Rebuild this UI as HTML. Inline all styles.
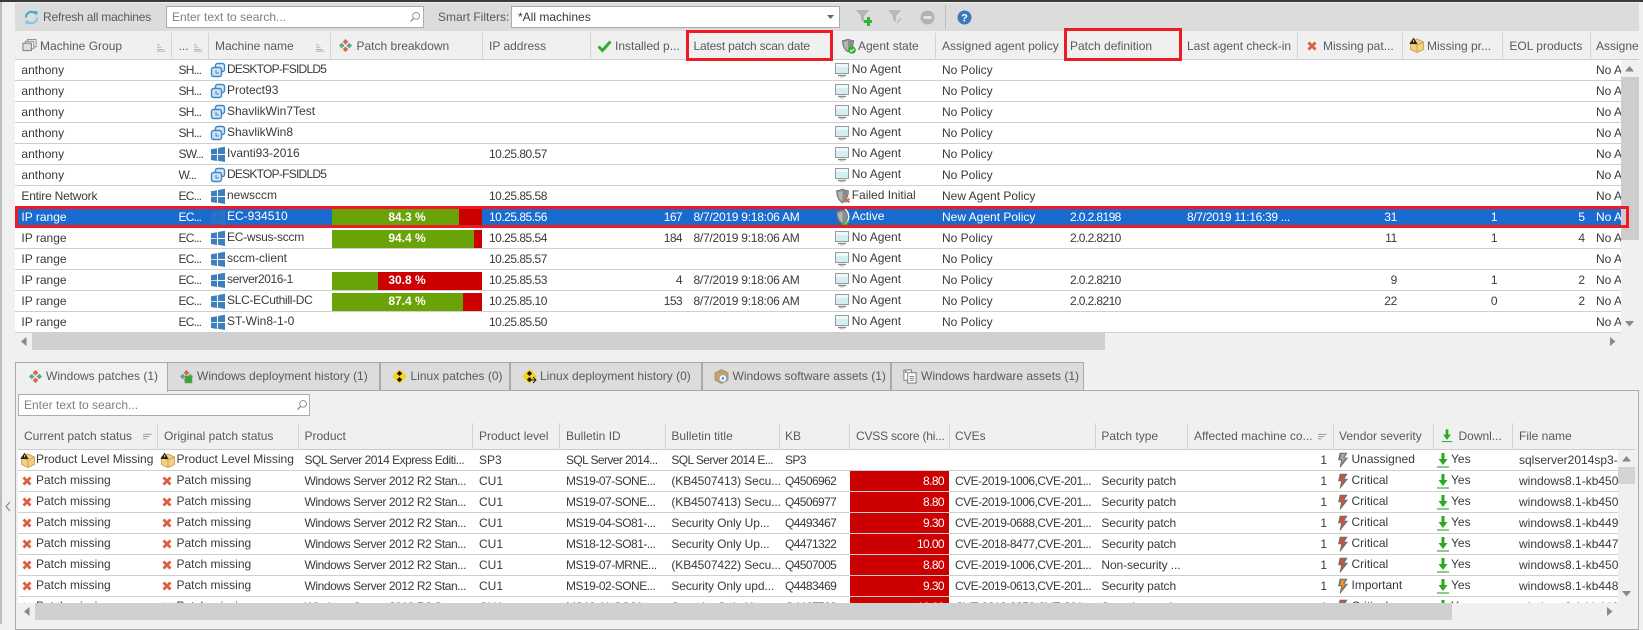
<!DOCTYPE html>
<html><head><meta charset="utf-8"><style>
*{box-sizing:border-box}
html,body{margin:0;padding:0}
body{width:1643px;height:624px;overflow:hidden;position:relative;background:#f0f0f0;font:12px/20px "Liberation Sans",sans-serif;color:#3a3a3a}
div{position:absolute}
i{position:absolute;font-style:normal;white-space:nowrap;top:0}
svg{position:absolute;overflow:visible}
.hd i{color:#555b62;top:3px;line-height:24px}
.hd .sp{position:absolute;top:2px;width:1px;height:27px;background:#d4d4d4}
.hd{left:0;height:29px;background:#f0f0f0;border-bottom:1px solid #ccc}
.r{position:relative;height:21px;width:1640px;background:#fff;border-bottom:1px solid #cfcfcf}
.r svg{top:2px;width:16px;height:16px}
.u{top:-1px}
.s{background:#1a6bd0;color:#fff;border-bottom:0}
.a{left:21.4px}.b{left:178.5px;letter-spacing:-.8px}.n{left:227px}.ip{left:489px;letter-spacing:-.5px}.ins{width:60px;text-align:right;letter-spacing:-.6px}.dt{left:693.5px;letter-spacing:-.25px}.ag{left:851.7px}.po{left:942px}.pd{left:1070px;letter-spacing:-.6px}.lc{left:1187px;letter-spacing:-.3px}.mp{left:1340px;width:57px;text-align:right;letter-spacing:-.3px}.mr{left:1440px;width:57.6px;text-align:right}.eo{left:1528px;width:57px;text-align:right}.as{left:1596px}
.bar{position:absolute;left:332px;top:2px;width:150px;height:18px;background:#cc0000;color:#fff;font-weight:bold;text-align:center;line-height:16px}
.bar u{position:absolute;left:0;top:0;height:18px;background:#6aa307}
.bar span{position:relative}
.tb{top:362px;height:29px;background:#dcdcdc;border:1px solid #aaa;border-bottom:1px solid #aaa;line-height:27px;color:#555b62}
.tb i{top:0;line-height:27px}
.tb svg{top:6px;width:15px;height:15px}
.sr{background:#fff;border:1px solid #acacac;color:#808080;height:22px;line-height:20px;padding-left:5px}
.l1{left:36px}.l2{left:176.5px}.l3{left:304.5px;letter-spacing:-.42px}.l4{left:479px}.l5{left:566px;letter-spacing:-.5px}.l6{left:671.4px;letter-spacing:-.1px}.l7{left:785px;letter-spacing:-.6px}
.cv{position:absolute;left:850px;top:0;width:99px;height:20px;background:#cc0000;color:#fff;text-align:right;padding-right:5px;letter-spacing:-.6px}
.l9{left:955px;letter-spacing:-.5px}.l10{left:1101.4px;letter-spacing:-.1px}.l11{left:1270px;width:57px;text-align:right}.l12{left:1351.5px}.l13{left:1451px}.l14{left:1519px}
</style></head><body>
<svg width="0" height="0" style="position:absolute">
<defs>
<symbol id="vm" viewBox="0 0 16 16"><rect x="5.5" y="1.5" width="9" height="8" rx="2" fill="#d8e8f6" stroke="#3f86c7" stroke-width="1.4"/><rect x="1.5" y="5.5" width="10" height="9" rx="2" fill="#cfe2f3" stroke="#3f86c7" stroke-width="1.4"/><path d="M6 8v3h3" fill="none" stroke="#3f86c7"/></symbol>
<symbol id="win" viewBox="0 0 16 16"><path d="M1 3.2l6-1v6H1zM8 2l7-1.2V8H8zM1 9h6v6l-6-1zM8 9h7v7l-7-1.2z" fill="#3f7fbd"/></symbol>
<symbol id="mon" viewBox="0 0 16 16"><rect x="1.5" y="1.5" width="13" height="10" fill="#d5eef4" stroke="#9a9a9a"/><path d="M2 2h12v3H2z" fill="#eef9fb"/><path d="M4 13.5h8" stroke="#8a8a8a" stroke-width="1.4"/><path d="M6 15h4" stroke="#c4c4c4"/></symbol>
<symbol id="sh" viewBox="0 0 16 16"><path d="M1.5 2.5C5 2.5 7 1 7.5 1c.6 0 2.500 1.500 6 1.500 0 6-1.500 10-6 12.500-4.500-2.500-6-6.500-6-12.500z" fill="#8c8c8c" stroke="#6e6e6e" stroke-width=".6"/><path d="M7.500 2.500v11C4 11.500 3 8 3 4c2 0 3.500-1 4.500-1.500z" fill="#b5b5b5"/></symbol>
<symbol id="x" viewBox="0 0 16 16"><path d="M4.500 4.500l7 7M11.500 4.500l-7 7" stroke="#dc5f3e" stroke-width="2.800"/></symbol>
<symbol id="box" viewBox="0 0 16 16"><path d="M8 2l6.500 3v7.500L8 15.500l-6.500-3V5z" fill="#f2cf82" stroke="#c89a45" stroke-width=".8"/><path d="M1.500 5L8 8.200l6.500-3.200M8 8.200v7.300" fill="none" stroke="#c89a45" stroke-width=".8"/><path d="M4.500 .6L8.600 7H.4z" fill="#222"/><path d="M4.500 2.800v2.400" stroke="#f5d300" stroke-width="1"/></symbol>
<symbol id="bolt" viewBox="0 0 16 16"><path d="M5 1h7L9 6h3.500L5 15.500 6.500 8H3.500z" fill="#8a6d66" stroke="#666" stroke-width=".6"/><path d="M6.500 1.800h3.800L8 6h2.500L6 12l1.500-5H5z" fill="#c9553a"/></symbol>
<symbol id="boltg" viewBox="0 0 16 16"><path d="M5 1h7L9 6h3.500L5 15.500 6.500 8H3.500z" fill="#777" stroke="#666" stroke-width=".6"/><path d="M6.500 1.800h3.800L8 6h2.500L6 12l1.500-5H5z" fill="#a8a8a8"/></symbol>
<symbol id="bolto" viewBox="0 0 16 16"><path d="M5 1h7L9 6h3.500L5 15.500 6.500 8H3.500z" fill="#777" stroke="#666" stroke-width=".6"/><path d="M6.500 1.800h3.800L8 6h2.500L6 12l1.500-5H5z" fill="#ef9a12"/></symbol>
<symbol id="dl" viewBox="0 0 16 16"><path d="M6.500 1h3v6h3l-4.500 6-4.500-6h3z" fill="#2aa81f"/><path d="M2 15h12" stroke="#2aa81f" stroke-width="1.100"/></symbol>
<symbol id="dia" viewBox="0 0 16 16"><path d="M8 1l3 3-3 3-3-3z" fill="#d9654c"/><path d="M8 9l3 3-3 3-3-3z" fill="#d9654c"/><path d="M4 5l3 3-3 3-3-3z" fill="#62a58a"/><path d="M12 5l3 3-3 3-3-3z" fill="#62a58a"/></symbol>
<symbol id="lin" viewBox="0 0 16 16"><path d="M8 0l8 8-8 8-8-8z" fill="#f7d416"/><path d="M8 2l2.800 2.800L8 7.500 5.200 4.800zM8 8.500l2.800 2.800L8 14l-2.800-2.700z" fill="#111"/></symbol>
<symbol id="sort1" viewBox="0 0 10 8"><path d="M0 .5h3M0 3h5M0 5.500h7.500M0 7.500h9.500" stroke="#a0a0a0" stroke-width=".8"/></symbol>
<symbol id="sort2" viewBox="0 0 10 8"><path d="M0 1h9.500M0 3.500h7M0 6h4" stroke="#8e8e8e" stroke-width="1"/></symbol>
<symbol id="mag" viewBox="0 0 16 16"><circle cx="9.500" cy="6.500" r="4.500" fill="none" stroke="#777" stroke-width="1"/><path d="M6 10l-4 4" stroke="#777" stroke-width="1.400"/></symbol>
</defs></svg>

<!-- toolbar -->
<div style="left:15px;top:3px;width:1624px;height:28px;background:#dcdcdc"></div>
<svg style="left:24px;top:10px" width="15" height="15" viewBox="0 0 16 16"><path d="M2 8a6 6 0 0 1 10.500-4" fill="none" stroke="#3ea6e0" stroke-width="2.200"/><path d="M14 8a6 6 0 0 1-10.500 4" fill="none" stroke="#7cc5ec" stroke-width="2.200"/><path d="M10 1l4.500 0.500L14 6z" fill="#3ea6e0"/><path d="M6 15l-4.500-.5L2 10z" fill="#7cc5ec"/></svg>
<i style="left:43px;top:7px;color:#555b62;letter-spacing:-.2px">Refresh all machines</i>
<div class="sr" style="left:166px;top:6px;width:258px">Enter text to search...</div>
<svg style="left:409px;top:11px" width="12" height="12"><use href="#mag"/></svg>
<i style="left:438px;top:7px;color:#555b62">Smart Filters:</i>
<div style="left:511px;top:6px;width:329px;height:22px;background:#fff;border:1px solid #acacac;line-height:20px;padding-left:6px;color:#3a3a3a">*All machines</div>
<svg style="left:827px;top:15px" width="8" height="5"><path d="M0 0h7L3.500 4z" fill="#666"/></svg>
<svg style="left:855px;top:9px" width="17" height="17" viewBox="0 0 17 17"><path d="M1 1h13L9 7v6L6 11V7z" fill="#b4b4b4"/><path d="M9 11h3V8h3v3h2v3h-2v3h-3v-3H9z" fill="#32b432"/></svg>
<svg style="left:887px;top:9px" width="17" height="17" viewBox="0 0 17 17"><path d="M1 1h13L9 7v6L6 11V7z" fill="#b8b8b8"/><path d="M10 14l4-5" stroke="#c4c4c4" stroke-width="2"/></svg>
<svg style="left:920px;top:10px" width="15" height="15"><circle cx="7.500" cy="7.500" r="7" fill="#b2b2b2"/><rect x="3.500" y="6" width="8" height="3" fill="#e4e4e4"/></svg>
<div style="left:945px;top:5px;width:1px;height:24px;background:#bcbcbc"></div>
<svg style="left:957px;top:10px" width="15" height="15"><circle cx="7.500" cy="7.500" r="7" fill="#3d78bd"/><text x="7.500" y="11.500" text-anchor="middle" font-family="Liberation Sans" font-weight="bold" font-size="11" fill="#fff">?</text></svg>

<!-- upper header -->
<div class="hd" style="top:31px;width:1624px;left:15px;height:29px"></div>
<div class="hd" style="top:31px;width:1639px;background:none;border:0;overflow:hidden;height:29px">
<span class="sp" style="left:171px"></span><span class="sp" style="left:208px"></span><span class="sp" style="left:330px"></span><span class="sp" style="left:482px"></span><span class="sp" style="left:590px"></span><span class="sp" style="left:935px"></span><span class="sp" style="left:1297px"></span><span class="sp" style="left:1402px"></span><span class="sp" style="left:1502px"></span><span class="sp" style="left:1590px"></span>
<svg style="left:22px;top:7px" width="15" height="15" viewBox="0 0 16 16"><rect x="6" y="1.500" width="9" height="8" fill="#f4f4f4" stroke="#8a8a8a"/><rect x="3.500" y="3.500" width="9" height="8" fill="#f4f4f4" stroke="#8a8a8a"/><rect x="1" y="5.500" width="9" height="8" fill="#dedede" stroke="#777"/></svg>
<i style="left:40px">Machine Group</i><svg style="left:157px;top:13px" width="9" height="8"><use href="#sort1"/></svg>
<i style="left:178.500px">...</i><svg style="left:194px;top:13px" width="9" height="8"><use href="#sort1"/></svg>
<i style="left:215px">Machine name</i><svg style="left:316px;top:13px" width="9" height="8"><use href="#sort1"/></svg>
<svg style="left:338px;top:7px" width="15" height="15"><use href="#dia"/></svg><i style="left:356.500px">Patch breakdown</i>
<i style="left:489px">IP address</i>
<svg style="left:597px;top:8px" width="15" height="14" viewBox="0 0 15 14"><path d="M1.500 7.500l4 4L13.500 2.500" fill="none" stroke="#2fb02f" stroke-width="3"/></svg><i style="left:615px">Installed p...</i>
<i style="left:693.500px;letter-spacing:-.2px">Latest patch scan date</i>
<svg style="left:841px;top:6px" width="15" height="17"><use href="#sh"/></svg><svg style="left:848px;top:15px" width="8" height="8"><circle cx="4" cy="4" r="3.800" fill="#2fb02f"/><path d="M2 4l1.500 1.500L6 2.800" stroke="#fff" fill="none"/></svg><i style="left:858px">Agent state</i>
<i style="left:942px">Assigned agent policy</i>
<i style="left:1070px">Patch definition</i>
<i style="left:1187px">Last agent check-in</i>
<svg style="left:1304px;top:7px" width="16" height="16"><use href="#x"/></svg><i style="left:1323px">Missing pat...</i>
<svg style="left:1409px;top:6px" width="16" height="16"><use href="#box"/></svg><i style="left:1427px">Missing pr...</i>
<i style="left:1509.400px">EOL products</i>
<i style="left:1596px">Assigned</i>
</div>

<!-- upper rows -->
<div style="left:0;top:60px;width:1621px;height:273px;overflow:hidden">
<div class="r"><i class="a">anthony</i><i class="b">SH...</i><svg style="left:210px"><use href="#vm"/></svg><i class="n u" style="letter-spacing:-.75px">DESKTOP-FSIDLD5</i><svg style="left:834px"><use href="#mon"/></svg><i class="ag u">No Agent</i><i class="po">No Policy</i><i class="as">No Agent</i></div>
<div class="r"><i class="a">anthony</i><i class="b">SH...</i><svg style="left:210px"><use href="#vm"/></svg><i class="n u">Protect93</i><svg style="left:834px"><use href="#mon"/></svg><i class="ag u">No Agent</i><i class="po">No Policy</i><i class="as">No Agent</i></div>
<div class="r"><i class="a">anthony</i><i class="b">SH...</i><svg style="left:210px"><use href="#vm"/></svg><i class="n u">ShavlikWin7Test</i><svg style="left:834px"><use href="#mon"/></svg><i class="ag u">No Agent</i><i class="po">No Policy</i><i class="as">No Agent</i></div>
<div class="r"><i class="a">anthony</i><i class="b">SH...</i><svg style="left:210px"><use href="#vm"/></svg><i class="n u">ShavlikWin8</i><svg style="left:834px"><use href="#mon"/></svg><i class="ag u">No Agent</i><i class="po">No Policy</i><i class="as">No Agent</i></div>
<div class="r"><i class="a">anthony</i><i class="b">SW...</i><svg style="left:210px"><use href="#win"/></svg><i class="n u">Ivanti93-2016</i><i class="ip">10.25.80.57</i><svg style="left:834px"><use href="#mon"/></svg><i class="ag u">No Agent</i><i class="po">No Policy</i><i class="as">No Agent</i></div>
<div class="r"><i class="a">anthony</i><i class="b">W...</i><svg style="left:210px"><use href="#vm"/></svg><i class="n u" style="letter-spacing:-.75px">DESKTOP-FSIDLD5</i><svg style="left:834px"><use href="#mon"/></svg><i class="ag u">No Agent</i><i class="po">No Policy</i><i class="as">No Agent</i></div>
<div class="r"><i class="a" style="letter-spacing:-.2px">Entire Network</i><i class="b">EC...</i><svg style="left:210px"><use href="#win"/></svg><i class="n u">newsccm</i><i class="ip">10.25.85.58</i><svg style="left:835px"><use href="#sh"/></svg><svg style="left:843px;top:10px;width:9px;height:9px"><use href="#x"/></svg><i class="ag u">Failed Initial</i><i class="po">New Agent Policy</i><i class="as">No Agent</i></div>
<div class="r s"><i class="a">IP range</i><i class="b">EC...</i><svg style="left:210px;opacity:.45"><use href="#win"/></svg><i class="n u">EC-934510</i><div class="bar"><u style="width:127px"></u><span>84.3 %</span></div><i class="ip">10.25.85.56</i><i class="ins" style="left:622px">167</i><i class="dt">8/7/2019 9:18:06 AM</i><svg style="left:835px"><use href="#sh"/></svg><svg style="left:841px;top:1px;width:10px;height:19px" viewBox="0 0 10 19"><path d="M4 1c5 4 5 11 0 15" fill="none" stroke="#fff" stroke-width="1.400"/><path d="M1 15l2.500 3L8 13" fill="none" stroke="#2fc02f" stroke-width="2"/></svg><i class="ag u">Active</i><i class="po">New Agent Policy</i><i class="pd">2.0.2.8198</i><i class="lc">8/7/2019 11:16:39 ...</i><i class="mp">31</i><i class="mr">1</i><i class="eo">5</i><i class="as">No Agent</i></div>
<div class="r"><i class="a">IP range</i><i class="b">EC...</i><svg style="left:210px"><use href="#win"/></svg><i class="n u" style="letter-spacing:-.25px">EC-wsus-sccm</i><div class="bar"><u style="width:142px"></u><span>94.4 %</span></div><i class="ip">10.25.85.54</i><i class="ins" style="left:622px">184</i><i class="dt">8/7/2019 9:18:06 AM</i><svg style="left:834px"><use href="#mon"/></svg><i class="ag u">No Agent</i><i class="po">No Policy</i><i class="pd">2.0.2.8210</i><i class="mp">11</i><i class="mr">1</i><i class="eo">4</i><i class="as">No Agent</i></div>
<div class="r"><i class="a">IP range</i><i class="b">EC...</i><svg style="left:210px"><use href="#win"/></svg><i class="n u">sccm-client</i><i class="ip">10.25.85.57</i><svg style="left:834px"><use href="#mon"/></svg><i class="ag u">No Agent</i><i class="po">No Policy</i><i class="as">No Agent</i></div>
<div class="r"><i class="a">IP range</i><i class="b">EC...</i><svg style="left:210px"><use href="#win"/></svg><i class="n u" style="letter-spacing:-.4px">server2016-1</i><div class="bar"><u style="width:46px"></u><span>30.8 %</span></div><i class="ip">10.25.85.53</i><i class="ins" style="left:622px">4</i><i class="dt">8/7/2019 9:18:06 AM</i><svg style="left:834px"><use href="#mon"/></svg><i class="ag u">No Agent</i><i class="po">No Policy</i><i class="pd">2.0.2.8210</i><i class="mp">9</i><i class="mr">1</i><i class="eo">2</i><i class="as">No Agent</i></div>
<div class="r"><i class="a">IP range</i><i class="b">EC...</i><svg style="left:210px"><use href="#win"/></svg><i class="n u" style="letter-spacing:-.3px">SLC-ECuthill-DC</i><div class="bar"><u style="width:131px"></u><span>87.4 %</span></div><i class="ip">10.25.85.10</i><i class="ins" style="left:622px">153</i><i class="dt">8/7/2019 9:18:06 AM</i><svg style="left:834px"><use href="#mon"/></svg><i class="ag u">No Agent</i><i class="po">No Policy</i><i class="pd">2.0.2.8210</i><i class="mp">22</i><i class="mr">0</i><i class="eo">2</i><i class="as">No Agent</i></div>
<div class="r"><i class="a">IP range</i><i class="b">EC...</i><svg style="left:210px"><use href="#win"/></svg><i class="n u">ST-Win8-1-0</i><i class="ip">10.25.85.50</i><svg style="left:834px"><use href="#mon"/></svg><i class="ag u">No Agent</i><i class="po">No Policy</i><i class="as">No Agent</i></div>
</div>
<div style="left:0;top:31px;width:15px;height:360px;background:#f0f0f0"></div>

<!-- upper scrollbars -->
<div style="left:1621px;top:60px;width:18px;height:273px;background:#f0f0f0"></div>
<div style="left:1621px;top:77px;width:18px;height:163px;background:#cdcdcd"></div>
<svg style="left:1625px;top:66px" width="10" height="6"><path d="M0 5.500h9L4.500 0z" fill="#888"/></svg>
<svg style="left:1625px;top:321px" width="10" height="6"><path d="M0 0h9L4.500 5.500z" fill="#888"/></svg>
<div style="left:15px;top:333px;width:1624px;height:17px;background:#f0f0f0"></div>
<div style="left:32px;top:333px;width:1073px;height:17px;background:#d0d0d0"></div>
<svg style="left:21px;top:337px" width="6" height="9"><path d="M5.500 0v9L0 4.500z" fill="#888"/></svg>
<svg style="left:1610px;top:337px" width="6" height="9"><path d="M0 0v9L5.500 4.500z" fill="#888"/></svg>

<!-- red highlight boxes -->
<div style="left:15px;top:206px;width:1614px;height:22px;border:3px solid #ed1c24"></div>
<div style="left:686px;top:30px;width:147px;height:31px;border:3px solid #ed1c24"></div>
<div style="left:1064px;top:28px;width:118px;height:33px;border:3px solid #ed1c24"></div>

<!-- tabs -->
<div style="left:15px;top:390px;width:1624px;height:240px;border:1px solid #aaa;background:#f0f0f0"></div>
<div class="tb" style="left:15px;width:153px;background:#f0f0f0;border-bottom:0;height:30px"><svg style="left:12px"><use href="#dia"/></svg><i style="left:30px">Windows patches (1)</i></div>
<div class="tb" style="left:167px;width:213px"><svg style="left:11px"><use href="#dia"/></svg><svg style="left:17px;top:13px;width:8px;height:8px"><rect width="7" height="7" fill="#2faa2f" stroke="#888" stroke-width=".5"/></svg><i style="left:29px">Windows deployment history (1)</i></div>
<div class="tb" style="left:380px;width:130px"><svg style="left:11px"><use href="#lin"/></svg><i style="left:29.500px">Linux patches (0)</i></div>
<div class="tb" style="left:510px;width:192px"><svg style="left:11px"><use href="#lin"/></svg><svg style="left:17px;top:13px;width:9px;height:8px"><path d="M0 4h8M5 1l3 3-3 3" stroke="#222" fill="none"/></svg><i style="left:29px">Linux deployment history (0)</i></div>
<div class="tb" style="left:702px;width:189px"><svg style="left:11px" viewBox="0 0 16 16"><path d="M8 .5l7 3.500v8L8 15.500 1 12V4z" fill="#c2a16a" stroke="#9c8050" stroke-width=".6"/><circle cx="9.500" cy="10" r="4" fill="#eef4f8" stroke="#8fa9bd"/><circle cx="9.500" cy="10" r="1.300" fill="#3a87c7"/></svg><i style="left:29.500px">Windows software assets (1)</i></div>
<div class="tb" style="left:891px;width:193px"><svg style="left:11px" viewBox="0 0 16 16"><rect x="1" y="1" width="8" height="11" fill="#fff" stroke="#777"/><rect x="5" y="4" width="9" height="11" fill="#fff" stroke="#777"/><path d="M7 8h5M7 10h5M7 12h5" stroke="#888"/><rect x="2" y="2" width="2" height="2" fill="#38a838"/></svg><i style="left:29px">Windows hardware assets (1)</i></div>
<div style="left:168px;top:390px;width:1471px;height:1px;background:#aaa"></div>
<div style="left:16px;top:390px;width:151px;height:1px;background:#f0f0f0"></div>

<!-- lower search -->
<div class="sr" style="left:18px;top:394px;width:292px">Enter text to search...</div>
<svg style="left:296px;top:399px" width="12" height="12"><use href="#mag"/></svg>

<!-- lower header -->
<div class="hd" style="top:421px;width:1617px;left:18px;height:29px"></div>
<div class="hd" style="top:421px;width:1635px;background:none;border:0;overflow:hidden;height:29px">
<span class="sp" style="left:157px"></span><span class="sp" style="left:298px"></span><span class="sp" style="left:472px"></span><span class="sp" style="left:559px"></span><span class="sp" style="left:665px"></span><span class="sp" style="left:779px"></span><span class="sp" style="left:849px"></span><span class="sp" style="left:949px"></span><span class="sp" style="left:1095px"></span><span class="sp" style="left:1187px"></span><span class="sp" style="left:1333px"></span><span class="sp" style="left:1433px"></span><span class="sp" style="left:1512px"></span>
<i style="left:24px">Current patch status</i><svg style="left:143px;top:12px" width="9" height="8"><use href="#sort2"/></svg>
<i style="left:164px">Original patch status</i>
<i style="left:304.500px">Product</i>
<i style="left:479px">Product level</i>
<i style="left:566px">Bulletin ID</i>
<i style="left:671.400px">Bulletin title</i>
<i style="left:785px">KB</i>
<i style="left:856px;letter-spacing:-.2px">CVSS score (hi...</i>
<i style="left:955px">CVEs</i>
<i style="left:1101.400px">Patch type</i>
<i style="left:1194px">Affected machine co...</i><svg style="left:1318px;top:12px" width="9" height="8"><use href="#sort2"/></svg>
<i style="left:1339px">Vendor severity</i>
<svg style="left:1440px;top:7px" width="14" height="15"><use href="#dl"/></svg><i style="left:1458.500px">Downl...</i>
<i style="left:1519px">File name</i>
</div>

<!-- lower rows -->
<div style="left:0;top:450px;width:1618px;height:153px;overflow:hidden">
<div class="r"><svg style="left:20px"><use href="#box"/></svg><i class="l1 u">Product Level Missing</i><svg style="left:160px"><use href="#box"/></svg><i class="l2 u">Product Level Missing</i><i class="l3" style="letter-spacing:-.5px">SQL Server 2014 Express Editi...</i><i class="l4">SP3</i><i class="l5" style="letter-spacing:-.6px">SQL Server 2014...</i><i class="l6" style="letter-spacing:-.6px">SQL Server 2014 E...</i><i class="l7">SP3</i><i class="l11">1</i><svg style="left:1335px"><use href="#boltg"/></svg><i class="l12 u">Unassigned</i><svg style="left:1435px"><use href="#dl"/></svg><i class="l13 u">Yes</i><i class="l14">sqlserver2014sp3-kb4</i></div>
<div class="r"><svg style="left:19px"><use href="#x"/></svg><i class="l1 u">Patch missing</i><svg style="left:159px"><use href="#x"/></svg><i class="l2 u">Patch missing</i><i class="l3">Windows Server 2012 R2 Stan...</i><i class="l4">CU1</i><i class="l5">MS19-07-SONE...</i><i class="l6">(KB4507413) Secu...</i><i class="l7">Q4506962</i><div class="cv">8.80</div><i class="l9">CVE-2019-1006,CVE-201...</i><i class="l10">Security patch</i><i class="l11">1</i><svg style="left:1335px"><use href="#bolt"/></svg><i class="l12 u">Critical</i><svg style="left:1435px"><use href="#dl"/></svg><i class="l13 u">Yes</i><i class="l14">windows8.1-kb4506</i></div>
<div class="r"><svg style="left:19px"><use href="#x"/></svg><i class="l1 u">Patch missing</i><svg style="left:159px"><use href="#x"/></svg><i class="l2 u">Patch missing</i><i class="l3">Windows Server 2012 R2 Stan...</i><i class="l4">CU1</i><i class="l5">MS19-07-SONE...</i><i class="l6">(KB4507413) Secu...</i><i class="l7">Q4506977</i><div class="cv">8.80</div><i class="l9">CVE-2019-1006,CVE-201...</i><i class="l10">Security patch</i><i class="l11">1</i><svg style="left:1335px"><use href="#bolt"/></svg><i class="l12 u">Critical</i><svg style="left:1435px"><use href="#dl"/></svg><i class="l13 u">Yes</i><i class="l14">windows8.1-kb4506</i></div>
<div class="r"><svg style="left:19px"><use href="#x"/></svg><i class="l1 u">Patch missing</i><svg style="left:159px"><use href="#x"/></svg><i class="l2 u">Patch missing</i><i class="l3">Windows Server 2012 R2 Stan...</i><i class="l4">CU1</i><i class="l5">MS19-04-SO81-...</i><i class="l6">Security Only Up...</i><i class="l7">Q4493467</i><div class="cv">9.30</div><i class="l9">CVE-2019-0688,CVE-201...</i><i class="l10">Security patch</i><i class="l11">1</i><svg style="left:1335px"><use href="#bolt"/></svg><i class="l12 u">Critical</i><svg style="left:1435px"><use href="#dl"/></svg><i class="l13 u">Yes</i><i class="l14">windows8.1-kb4493</i></div>
<div class="r"><svg style="left:19px"><use href="#x"/></svg><i class="l1 u">Patch missing</i><svg style="left:159px"><use href="#x"/></svg><i class="l2 u">Patch missing</i><i class="l3">Windows Server 2012 R2 Stan...</i><i class="l4">CU1</i><i class="l5">MS18-12-SO81-...</i><i class="l6">Security Only Up...</i><i class="l7">Q4471322</i><div class="cv">10.00</div><i class="l9">CVE-2018-8477,CVE-201...</i><i class="l10">Security patch</i><i class="l11">1</i><svg style="left:1335px"><use href="#bolt"/></svg><i class="l12 u">Critical</i><svg style="left:1435px"><use href="#dl"/></svg><i class="l13 u">Yes</i><i class="l14">windows8.1-kb4471</i></div>
<div class="r"><svg style="left:19px"><use href="#x"/></svg><i class="l1 u">Patch missing</i><svg style="left:159px"><use href="#x"/></svg><i class="l2 u">Patch missing</i><i class="l3">Windows Server 2012 R2 Stan...</i><i class="l4">CU1</i><i class="l5">MS19-07-MRNE...</i><i class="l6">(KB4507422) Secu...</i><i class="l7">Q4507005</i><div class="cv">8.80</div><i class="l9">CVE-2019-1006,CVE-201...</i><i class="l10">Non-security ...</i><i class="l11">1</i><svg style="left:1335px"><use href="#bolt"/></svg><i class="l12 u">Critical</i><svg style="left:1435px"><use href="#dl"/></svg><i class="l13 u">Yes</i><i class="l14">windows8.1-kb4507</i></div>
<div class="r"><svg style="left:19px"><use href="#x"/></svg><i class="l1 u">Patch missing</i><svg style="left:159px"><use href="#x"/></svg><i class="l2 u">Patch missing</i><i class="l3">Windows Server 2012 R2 Stan...</i><i class="l4">CU1</i><i class="l5">MS19-02-SONE...</i><i class="l6">Security Only upd...</i><i class="l7">Q4483469</i><div class="cv">9.30</div><i class="l9">CVE-2019-0613,CVE-201...</i><i class="l10">Security patch</i><i class="l11">1</i><svg style="left:1335px"><use href="#bolto"/></svg><i class="l12 u">Important</i><svg style="left:1435px"><use href="#dl"/></svg><i class="l13 u">Yes</i><i class="l14">windows8.1-kb4483</i></div>
<div class="r"><svg style="left:19px"><use href="#x"/></svg><i class="l1 u">Patch missing</i><svg style="left:159px"><use href="#x"/></svg><i class="l2 u">Patch missing</i><i class="l3">Windows Server 2012 R2 Stan...</i><i class="l4">CU1</i><i class="l5">MS18-11-SO81-...</i><i class="l6">Security Only Up...</i><i class="l7">Q4467703</i><div class="cv">10.00</div><i class="l9">CVE-2018-8256,CVE-201...</i><i class="l10">Security patch</i><i class="l11">1</i><svg style="left:1335px"><use href="#bolt"/></svg><i class="l12 u">Critical</i><svg style="left:1435px"><use href="#dl"/></svg><i class="l13 u">Yes</i><i class="l14">windows8.1-kb4467</i></div>
</div>
<div style="left:0;top:391px;width:15px;height:233px;background:#f0f0f0"></div>
<svg style="left:5px;top:502px" width="6" height="9"><path d="M5 0L1 4.500 5 9" fill="none" stroke="#8a8a8a" stroke-width="1.200"/></svg>
<div style="left:15px;top:391px;width:1px;height:233px;background:#aaa"></div>
<div style="left:16px;top:450px;width:2px;height:174px;background:#f0f0f0"></div>

<!-- lower scrollbars -->
<div style="left:1618px;top:450px;width:17px;height:170px;background:#f0f0f0"></div>
<div style="left:1618px;top:467px;width:17px;height:17px;background:#d4d4d4"></div>
<svg style="left:1622px;top:456px" width="10" height="6"><path d="M0 5.500h9L4.500 0z" fill="#888"/></svg>
<svg style="left:1622px;top:591px" width="10" height="6"><path d="M0 0h9L4.500 5.500z" fill="#888"/></svg>
<div style="left:18px;top:603px;width:1617px;height:17px;background:#f0f0f0"></div>
<div style="left:35px;top:603px;width:1417px;height:17px;background:#d0d0d0"></div>
<svg style="left:24px;top:607px" width="6" height="9"><path d="M5.500 0v9L0 4.500z" fill="#888"/></svg>
<svg style="left:1607px;top:607px" width="6" height="9"><path d="M0 0v9L5.500 4.500z" fill="#888"/></svg>

<!-- window edges -->
<div style="left:0;top:0;width:1643px;height:2px;background:#3a3a3a"></div>
<div style="left:0;top:2px;width:2px;height:622px;background:#bdbdbd"></div>
</body></html>
